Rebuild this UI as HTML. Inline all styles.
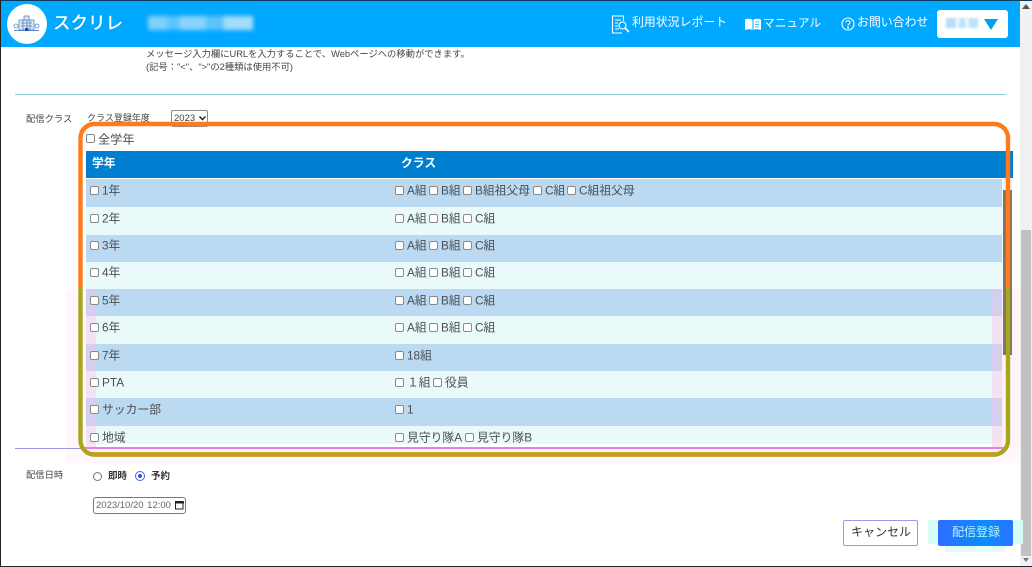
<!DOCTYPE html>
<html lang="ja"><head><meta charset="utf-8"><style>
*{box-sizing:border-box}
html,body{margin:0;padding:0;width:1032px;height:567px;overflow:hidden;background:#fff}
body{position:relative;font-family:"Liberation Sans","Noto Sans CJK JP",sans-serif;color:#444;filter:blur(.3px)}
.a{position:absolute;white-space:nowrap;line-height:1}
.r{position:absolute;left:86px;width:916px}
.c{position:absolute;width:9px;height:9px;border:1px solid #8a8a8a;border-radius:2px;background:#fff}
.t{position:absolute;font-size:11.800px;line-height:14px;white-space:nowrap;color:#4a4f55;transform:translateY(.5px)}
.s{font-size:9.300px;color:#444}
.nav{color:#fff;font-size:11.900px}
</style></head><body>
<div class="a" style="left:0;top:0;width:1020px;height:47px;background:#00a8ff"></div>
<div class="a" style="left:0;top:0;width:1032px;height:1px;background:#0b3a5c"></div>
<div class="a" style="left:0;top:0;width:1px;height:567px;background:#222"></div>
<div class="a" style="left:0;top:566px;width:1032px;height:1px;background:#223"></div>

<div class="a" style="left:7px;top:4px;width:40px;height:40px;border-radius:50%;background:#fff"></div>
<svg class="a" style="left:13px;top:14px" width="27" height="20" viewBox="0 0 27 20" fill="none" stroke="#5b86c4" stroke-width=".8">
<rect x="6" y="6" width="15" height="10" fill="#dbe7f5"/><rect x="11" y="2" width="5" height="4" fill="#dbe7f5"/>
<path d="M8 9h11M8 12h11M10 6v10M14 6v10M17 6v10"/><circle cx="3" cy="12" r="2"/><circle cx="24" cy="12" r="2"/>
<path d="M1 16.500h25" stroke-width="1"/><rect x="12" y="14" width="3.500" height="3" fill="#1f4f9c" stroke="none"/></svg>
<div class="a" style="left:53px;top:15px;font-size:17.500px;color:#fff;font-weight:500">スクリレ</div>
<div class="a" style="left:148px;top:16px;width:105px;height:14px;background:linear-gradient(90deg,#7fd0fb 0 18%,#5cc4fc 18% 30%,#8ad4fb 30% 55%,#5cc4fc 55% 72%,#a5ddfa 72% 100%);filter:blur(2px)"></div>

<svg class="a" style="left:611px;top:15px" width="20" height="19" viewBox="0 0 20 19" fill="none" stroke="#fff" stroke-width="1.100">
<path d="M11 18H1.500V1h11v5"/><path d="M4 5h6M4 8h3M4 11h3M4 14h4"/><circle cx="11.500" cy="10.500" r="3.500"/><path d="M14 13l4 4" stroke-width="1.600"/></svg>
<div class="a nav" style="left:632px;top:17px">利用状況レポート</div>
<svg class="a" style="left:745px;top:18px" width="16" height="12" viewBox="0 0 16 12"><path d="M0 1.500C3 .5 6 .5 7.500 2v10C6 11 3 11 0 12z" fill="#fff"/><path d="M8.500 2c1.500-1.500 4.500-1.500 7.500-.5V12c-3-1-6-1-7.500 0z" fill="#fff"/><path d="M10 4h4M10 6.500h4M10 9h4" stroke="#00a8ff" stroke-width=".8"/></svg>
<div class="a nav" style="left:763px;top:18px;font-size:11.700px">マニュアル</div>
<svg class="a" style="left:841px;top:17px" width="14" height="14" viewBox="0 0 14 14" fill="none" stroke="#fff" stroke-width="1.100"><circle cx="7" cy="7" r="6"/><path d="M5 5.500C5 3 9 3 9 5.500 9 7 7 7 7 8.800"/><circle cx="7" cy="10.600" r=".5" fill="#fff"/></svg>
<div class="a nav" style="left:857px;top:17px">お問い合わせ</div>
<div class="a" style="left:937px;top:10px;width:71px;height:28px;background:#fff;border-radius:3px"></div>
<div class="a" style="left:946px;top:18px;width:32px;height:10px;background:linear-gradient(90deg,#b4dff7 0 30%,#e8f5fc 30% 42%,#bde3f8 42% 60%,#e8f5fc 60% 72%,#bde3f8 72%);filter:blur(1px)"></div>
<svg class="a" style="left:984px;top:19px" width="14" height="11"><path d="M0 0h14L7 11z" fill="#00a1f0"/></svg>

<div class="a s" style="left:146px;top:50px">メッセージ入力欄にURLを入力することで、Webページへの移動ができます。</div>
<div class="a s" style="left:146px;top:63px">(記号："&lt;"、"&gt;"の2種類は使用不可)</div>
<div class="a" style="left:15px;top:94px;width:991px;height:1px;background:#8fd0e2"></div>
<div class="a s" style="left:26px;top:115px">配信クラス</div>
<div class="a s" style="left:87px;top:114px;font-size:9px">クラス登録年度</div>
<div class="a" style="left:171px;top:110px;width:37px;height:17px;border:1px solid #8a8a8a;border-radius:2px;background:#fff"></div>
<div class="a" style="left:174px;top:114px;font-size:9.500px;color:#444">2023</div>
<svg class="a" style="left:199px;top:116px" width="7" height="5"><path d="M.5.500L3.500 3.500 6.500.500" fill="none" stroke="#222" stroke-width="1.500"/></svg>

<!-- pink halo -->
<div class="a" style="left:65px;top:289px;width:31px;height:174px;background:#fff7fb"></div>
<div class="a" style="left:992px;top:289px;width:30px;height:174px;background:#fff3fa"></div>
<div class="a" style="left:65px;top:449px;width:957px;height:14px;background:#fff7fb"></div>

<div class="c" style="left:86px;top:134px"></div>
<div class="t" style="left:98px;top:132px;font-size:12.200px">全学年</div>

<div class="a" style="left:86px;top:151px;width:927px;height:27px;background:#007fd0"></div>
<div class="a" style="left:92px;top:158px;font-size:11.800px;font-weight:700;color:#fff">学年</div>
<div class="a" style="left:401px;top:158px;font-size:11.800px;font-weight:700;color:#fff">クラス</div>

<div class="r" style="top:179px;height:28px;background:#bbd9f0"></div>
<div class="r" style="top:207px;height:28px;background:#eafafa"></div>
<div class="r" style="top:235px;height:27px;background:#bbd9f0"></div>
<div class="r" style="top:262px;height:27px;background:#eafafa"></div>
<div class="r" style="top:289px;height:27px;background:#bbd9f0"></div>
<div class="r" style="top:316px;height:28px;background:#eafafa"></div>
<div class="r" style="top:344px;height:27px;background:#bbd9f0"></div>
<div class="r" style="top:371px;height:27px;background:#eafafa"></div>
<div class="r" style="top:398px;height:28px;background:#bbd9f0"></div>
<div class="r" style="top:426px;height:18px;background:#eafafa"></div>

<!-- pink tint over table edges -->
<div class="a" style="left:86px;top:289px;width:10px;height:158px;background:rgba(255,190,235,.4)"></div>
<div class="a" style="left:992px;top:289px;width:10px;height:158px;background:rgba(255,190,235,.4)"></div>

<!-- rows -->
<div class="c" style="left:90px;top:186px"></div><div class="t" style="left:102px;top:183px">1年</div>
<div class="c" style="left:395px;top:186px"></div><div class="t" style="left:407px;top:183px">A組</div>
<div class="c" style="left:429px;top:186px"></div><div class="t" style="left:441px;top:183px">B組</div>
<div class="c" style="left:463px;top:186px"></div><div class="t" style="left:475px;top:183px">B組祖父母</div>
<div class="c" style="left:533px;top:186px"></div><div class="t" style="left:545px;top:183px">C組</div>
<div class="c" style="left:567px;top:186px"></div><div class="t" style="left:579px;top:183px">C組祖父母</div>

<div class="c" style="left:90px;top:214px"></div><div class="t" style="left:102px;top:211px">2年</div>
<div class="c" style="left:395px;top:214px"></div><div class="t" style="left:407px;top:211px">A組</div>
<div class="c" style="left:429px;top:214px"></div><div class="t" style="left:441px;top:211px">B組</div>
<div class="c" style="left:463px;top:214px"></div><div class="t" style="left:475px;top:211px">C組</div>

<div class="c" style="left:90px;top:241px"></div><div class="t" style="left:102px;top:238px">3年</div>
<div class="c" style="left:395px;top:241px"></div><div class="t" style="left:407px;top:238px">A組</div>
<div class="c" style="left:429px;top:241px"></div><div class="t" style="left:441px;top:238px">B組</div>
<div class="c" style="left:463px;top:241px"></div><div class="t" style="left:475px;top:238px">C組</div>

<div class="c" style="left:90px;top:268px"></div><div class="t" style="left:102px;top:265px">4年</div>
<div class="c" style="left:395px;top:268px"></div><div class="t" style="left:407px;top:265px">A組</div>
<div class="c" style="left:429px;top:268px"></div><div class="t" style="left:441px;top:265px">B組</div>
<div class="c" style="left:463px;top:268px"></div><div class="t" style="left:475px;top:265px">C組</div>

<div class="c" style="left:90px;top:296px"></div><div class="t" style="left:102px;top:293px">5年</div>
<div class="c" style="left:395px;top:296px"></div><div class="t" style="left:407px;top:293px">A組</div>
<div class="c" style="left:429px;top:296px"></div><div class="t" style="left:441px;top:293px">B組</div>
<div class="c" style="left:463px;top:296px"></div><div class="t" style="left:475px;top:293px">C組</div>

<div class="c" style="left:90px;top:323px"></div><div class="t" style="left:102px;top:320px">6年</div>
<div class="c" style="left:395px;top:323px"></div><div class="t" style="left:407px;top:320px">A組</div>
<div class="c" style="left:429px;top:323px"></div><div class="t" style="left:441px;top:320px">B組</div>
<div class="c" style="left:463px;top:323px"></div><div class="t" style="left:475px;top:320px">C組</div>

<div class="c" style="left:90px;top:351px"></div><div class="t" style="left:102px;top:348px">7年</div>
<div class="c" style="left:395px;top:351px"></div><div class="t" style="left:407px;top:348px">18組</div>

<div class="c" style="left:90px;top:378px"></div><div class="t" style="left:102px;top:375px">PTA</div>
<div class="c" style="left:395px;top:378px"></div><div class="t" style="left:407px;top:375px">１組</div>
<div class="c" style="left:433px;top:378px"></div><div class="t" style="left:445px;top:375px">役員</div>

<div class="c" style="left:90px;top:405px"></div><div class="t" style="left:102px;top:402px">サッカー部</div>
<div class="c" style="left:395px;top:405px"></div><div class="t" style="left:407px;top:402px">1</div>

<div class="c" style="left:90px;top:433px"></div><div class="t" style="left:102px;top:430px">地域</div>
<div class="c" style="left:395px;top:433px"></div><div class="t" style="left:407px;top:430px">見守り隊A</div>
<div class="c" style="left:465px;top:433px"></div><div class="t" style="left:477px;top:430px">見守り隊B</div>

<!-- inner scrollbar -->
<div class="a" style="left:1003px;top:178px;width:9px;height:12px;background:#f1f1f1"></div>
<div class="a" style="left:1003px;top:190px;width:9px;height:165px;background:#7f7468"></div>

<!-- divider -->
<div class="a" style="left:15px;top:448px;width:991px;height:1px;background:#9a9ae0"></div>
<div class="a" style="left:83px;top:447px;width:923px;height:2px;background:#ea80d8"></div>

<!-- annotation frame -->
<svg class="a" style="left:0;top:0" width="1032" height="567" fill="none">
<defs><clipPath id="top"><rect x="0" y="0" width="1032" height="288"/></clipPath><clipPath id="bot"><rect x="0" y="288" width="1032" height="279"/></clipPath></defs>
<rect x="80.500" y="124" width="927.500" height="330.500" rx="14" stroke="#fe7a1d" stroke-width="4.400" clip-path="url(#top)"/>
<rect x="80.500" y="124" width="927.500" height="330.500" rx="14" stroke="#a9a61e" stroke-width="4.400" clip-path="url(#bot)"/>
<path d="M92 454.500H996" stroke="#c69c1e" stroke-width="4.400"/>
</svg>

<!-- outer scrollbar -->
<div class="a" style="left:1020px;top:1px;width:12px;height:565px;background:#f1f1f1"></div>
<div class="a" style="left:1021px;top:230px;width:10px;height:326px;background:#c1c1c1"></div>
<svg class="a" style="left:1022px;top:4px" width="8" height="5"><path d="M4 0L8 5H0z" fill="#555"/></svg>
<svg class="a" style="left:1023px;top:558px" width="6" height="4"><path d="M3 4L6 0H0z" fill="#777"/></svg>

<!-- bottom form -->
<div class="a s" style="left:26px;top:471px">配信日時</div>
<div class="a" style="left:93px;top:472px;width:9px;height:9px;border:1px solid #777;border-radius:50%;background:#fff"></div>
<div class="a" style="left:108px;top:472px;font-size:9.500px;font-weight:700;color:#333">即時</div>
<div class="a" style="left:135px;top:471px;width:10px;height:10px;border:1px solid #3a64e8;border-radius:50%;background:#fff"></div>
<div class="a" style="left:138px;top:474px;width:4px;height:4px;border-radius:50%;background:#2a50e0"></div>
<div class="a" style="left:151px;top:472px;font-size:9.500px;font-weight:700;color:#333">予約</div>
<div class="a" style="left:93px;top:497px;width:93px;height:17px;border:1px solid #777;border-radius:3px;background:#fff"></div>
<div class="a" style="left:96px;top:501px;font-size:9.500px;color:#666;word-spacing:1px">2023/10/20 12:00</div>
<svg class="a" style="left:175px;top:500px" width="9" height="10" fill="none" stroke="#222"><rect x=".5" y="1.500" width="7.500" height="7.500" stroke-width="1"/><path d="M0 2.500h9" stroke-width="2"/></svg>

<div class="a" style="left:843px;top:520px;width:75px;height:26px;border:1px solid #9a9ae4;border-radius:2px;background:#fff"></div>
<div class="a" style="left:851px;top:526px;font-size:12px;color:#333">キャンセル</div>
<div class="a" style="left:928px;top:520px;width:95px;height:24px;background:#d6fdf8"></div>
<div class="a" style="left:945px;top:540px;width:60px;height:12px;background:#e2fdfa"></div>
<div class="a" style="left:938px;top:520px;width:75px;height:26px;border-radius:2px;background:linear-gradient(90deg,#2f6cff,#0a8cff 60%,#2a74ff)"></div>
<div class="a" style="left:952px;top:526px;font-size:12px;color:#b8f2ff">配信登録</div>
</body></html>
